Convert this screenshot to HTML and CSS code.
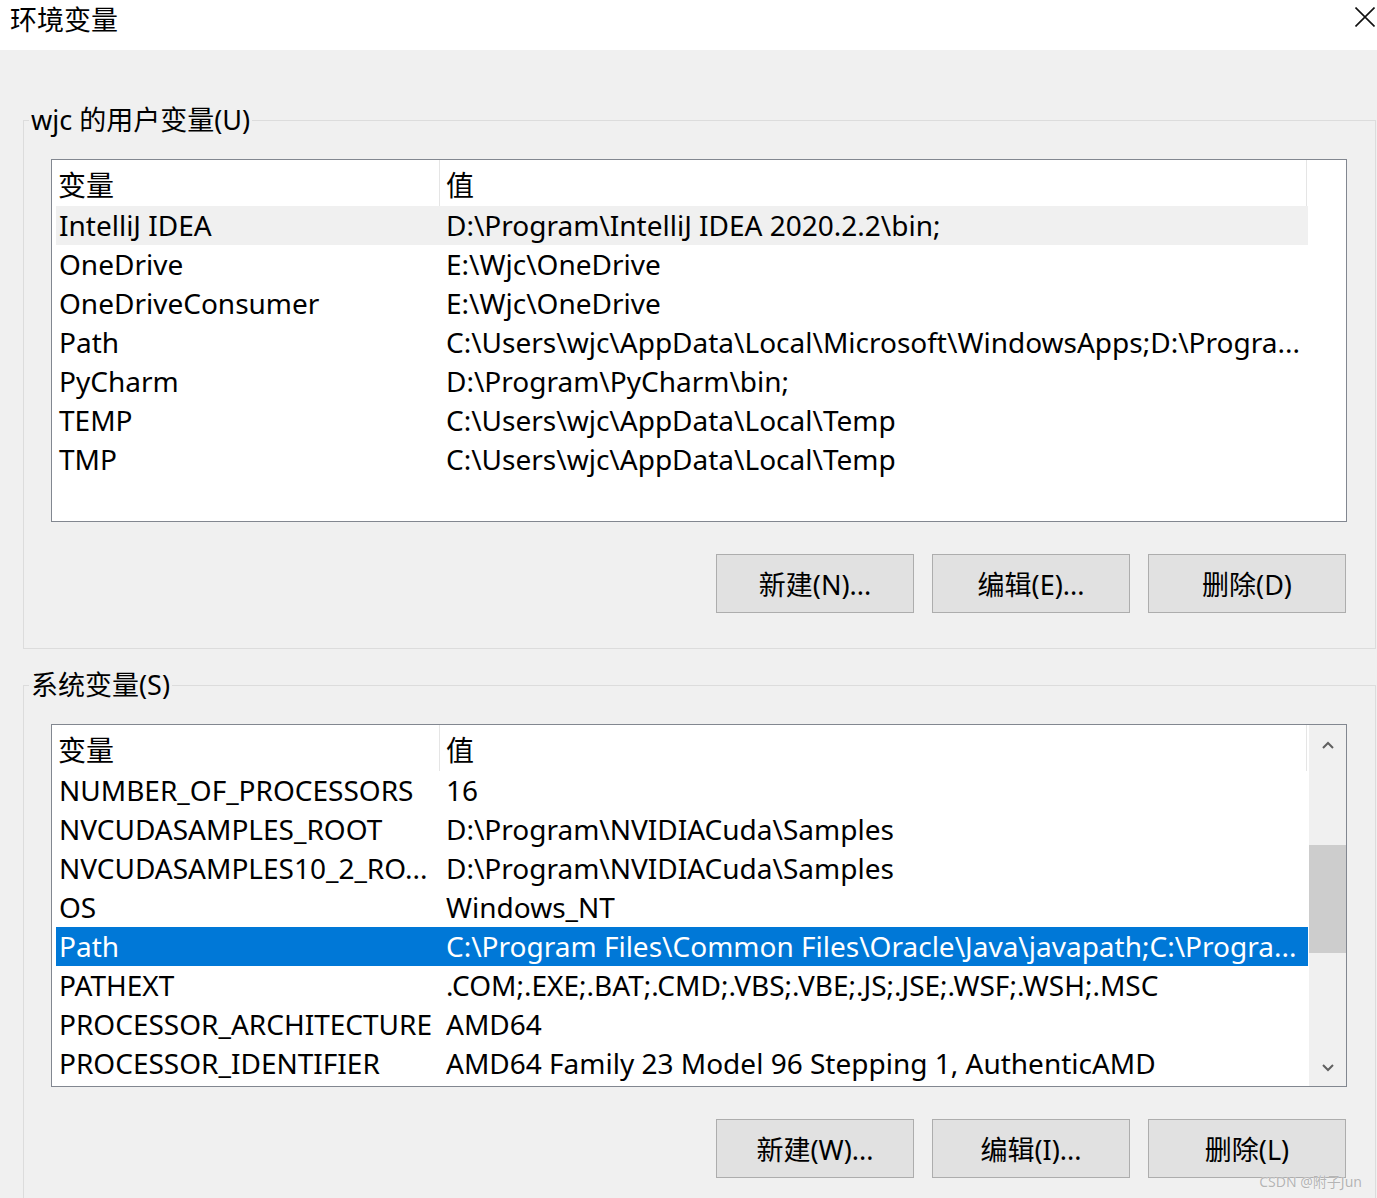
FILE: index.html
```html
<!DOCTYPE html>
<html lang="zh-CN">
<head>
    <meta charset="UTF-8">
    <meta name="viewport" content="width=device-width, initial-scale=1.0">
    <title>环境变量</title>
    <link rel="stylesheet" href="styles.css">
</head>
<body>
    <header class="titlebar">
        <span class="title">环境变量</span>
        <svg class="close-icon" width="20" height="20" viewBox="0 0 20 20">
            <path d="M0.5 0.5 L19.5 19.5 M19.5 0.5 L0.5 19.5" stroke="#111" stroke-width="1.6" fill="none"/>
        </svg>
    </header>

    <main class="dialog">
        <fieldset class="group">
            <legend>wjc 的用户变量(U)</legend>
            <div class="group-body">
                <div class="listbox">
                    <div class="list-body">
                        <div class="list-header">
                            <div class="col-name">变量</div>
                            <div class="col-value">值</div>
                        </div>
                        <div class="row hover"><span class="cell-name">IntelliJ IDEA</span><span class="cell-value">D:\Program\IntelliJ IDEA 2020.2.2\bin;</span></div>
                        <div class="row"><span class="cell-name">OneDrive</span><span class="cell-value">E:\Wjc\OneDrive</span></div>
                        <div class="row"><span class="cell-name">OneDriveConsumer</span><span class="cell-value">E:\Wjc\OneDrive</span></div>
                        <div class="row"><span class="cell-name">Path</span><span class="cell-value">C:\Users\wjc\AppData\Local\Microsoft\WindowsApps;D:\Progra...</span></div>
                        <div class="row"><span class="cell-name">PyCharm</span><span class="cell-value">D:\Program\PyCharm\bin;</span></div>
                        <div class="row"><span class="cell-name">TEMP</span><span class="cell-value">C:\Users\wjc\AppData\Local\Temp</span></div>
                        <div class="row"><span class="cell-name">TMP</span><span class="cell-value">C:\Users\wjc\AppData\Local\Temp</span></div>
                    </div>
                    <div class="no-scroll"></div>
                </div>
                <div class="buttons">
                    <button class="btn">新建(N)...</button>
                    <button class="btn">编辑(E)...</button>
                    <button class="btn">删除(D)</button>
                </div>
            </div>
        </fieldset>

        <fieldset class="group">
            <legend>系统变量(S)</legend>
            <div class="group-body">
                <div class="listbox">
                    <div class="list-body">
                        <div class="list-header">
                            <div class="col-name">变量</div>
                            <div class="col-value">值</div>
                        </div>
                        <div class="row"><span class="cell-name">NUMBER_OF_PROCESSORS</span><span class="cell-value">16</span></div>
                        <div class="row"><span class="cell-name">NVCUDASAMPLES_ROOT</span><span class="cell-value">D:\Program\NVIDIACuda\Samples</span></div>
                        <div class="row"><span class="cell-name">NVCUDASAMPLES10_2_RO...</span><span class="cell-value">D:\Program\NVIDIACuda\Samples</span></div>
                        <div class="row"><span class="cell-name">OS</span><span class="cell-value">Windows_NT</span></div>
                        <div class="row selected"><span class="cell-name">Path</span><span class="cell-value">C:\Program Files\Common Files\Oracle\Java\javapath;C:\Progra...</span></div>
                        <div class="row"><span class="cell-name">PATHEXT</span><span class="cell-value">.COM;.EXE;.BAT;.CMD;.VBS;.VBE;.JS;.JSE;.WSF;.WSH;.MSC</span></div>
                        <div class="row"><span class="cell-name">PROCESSOR_ARCHITECTURE</span><span class="cell-value">AMD64</span></div>
                        <div class="row"><span class="cell-name">PROCESSOR_IDENTIFIER</span><span class="cell-value">AMD64 Family 23 Model 96 Stepping 1, AuthenticAMD</span></div>
                    </div>
                    <div class="scrollbar">
                        <svg class="arrow" width="12" height="8" viewBox="0 0 12 8">
                            <path d="M1 7 L6 2 L11 7" stroke="#606060" stroke-width="2" fill="none"/>
                        </svg>
                        <div class="track">
                            <div class="thumb"></div>
                        </div>
                        <svg class="arrow" width="12" height="8" viewBox="0 0 12 8">
                            <path d="M1 1 L6 6 L11 1" stroke="#606060" stroke-width="2" fill="none"/>
                        </svg>
                    </div>
                </div>
                <div class="buttons">
                    <button class="btn">新建(W)...</button>
                    <button class="btn">编辑(I)...</button>
                    <button class="btn">删除(L)</button>
                </div>
            </div>
        </fieldset>
    </main>

    <div class="watermark">CSDN @附子Jun</div>
</body>
</html>
```

FILE: styles.css
```css
:root {
    --face-color: #f0f0f0;
    --list-border: #828790;
    --group-border: #dcdcdc;
    --select-color: #0078d7;
    --text-color: #000;
}

* {
    margin: 0;
    padding: 0;
    box-sizing: border-box;
    font-family: 'Noto Sans', 'Noto Sans CJK SC', sans-serif;
}

body {
    width: 1377px;
    height: 1198px;
    overflow: hidden;
    background-color: var(--face-color);
    color: var(--text-color);
    font-size: 27px;
    position: relative;
}

.titlebar {
    height: 50px;
    background: white;
    display: flex;
    align-items: flex-start;
    justify-content: space-between;
    padding: 0 2px 0 10px;
}

.title {
    font-size: 27px;
    line-height: 36px;
    margin-top: 2px;
}

.close-icon {
    margin-top: 7px;
}

.dialog {
    padding: 52px 1px 0 23px;
}

.group {
    border: 1px solid var(--group-border);
    margin-bottom: 18px;
    min-width: 0;
}

.group legend {
    margin-left: 5px;
    padding: 0 2px;
    font-size: 27px;
    line-height: 36px;
}

.group-body {
    padding: 21px 28px 35px 27px;
}

.listbox {
    height: 363px;
    border: 1px solid var(--list-border);
    background: white;
    display: flex;
    overflow: hidden;
    font-size: 28px;
}

.list-body {
    width: 1256px;
    flex: none;
}

.list-header {
    display: flex;
    height: 46px;
    width: 1255px;
    border-right: 1px solid #e5e5e5;
    line-height: 46px;
    padding-top: 2px;
}

.col-name {
    width: 388px;
    padding-left: 6px;
    border-right: 1px solid #e5e5e5;
    margin-top: -2px;
    padding-top: 2px;
}

.col-value {
    padding-left: 6px;
}

.row {
    display: flex;
    height: 39px;
    line-height: 39px;
    margin-left: 4px;
    white-space: nowrap;
}

.row.hover {
    background: var(--face-color);
}

.row.selected {
    background: var(--select-color);
    color: white;
}

.cell-name {
    width: 390px;
    padding-left: 3px;
    overflow: hidden;
    flex: none;
}

.cell-value {
    overflow: hidden;
}

.no-scroll {
    flex: 1;
}

.scrollbar {
    flex: 1;
    margin-left: 1px;
    background: var(--face-color);
    display: flex;
    flex-direction: column;
    align-items: center;
}

.scrollbar .arrow {
    margin: 16px 0;
    flex: none;
}

.track {
    flex: 1;
    width: 100%;
    padding-top: 80px;
    padding-bottom: 95px;
}

.thumb {
    height: 108px;
    background: #cdcdcd;
}

.buttons {
    display: flex;
    justify-content: flex-end;
    gap: 18px;
    margin-top: 32px;
    padding-right: 1px;
}

.btn {
    width: 198px;
    height: 59px;
    background: #e1e1e1;
    border: 1px solid #adadad;
    font-size: 27px;
    color: var(--text-color);
}

.watermark {
    position: absolute;
    right: 15px;
    bottom: 7px;
    font-size: 14px;
    color: #b4b4b4;
    text-shadow: 0 0 1px white;
}
```
